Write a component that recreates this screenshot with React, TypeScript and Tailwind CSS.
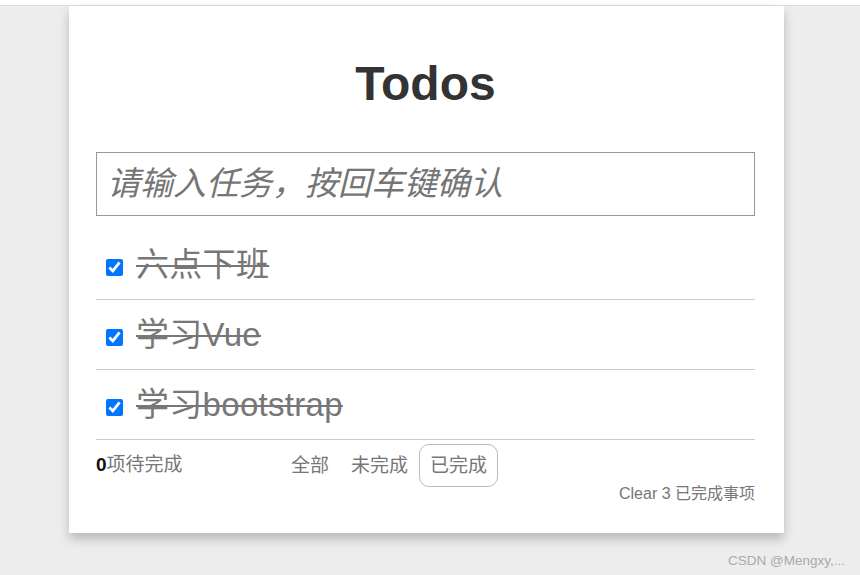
import React from "react";

const todos = ["六点下班", "学习Vue", "学习bootstrap"];

const sans = "font-['Liberation_Sans','Noto_Sans_CJK_SC',sans-serif]";

export default function App() {
  return (
    <div className={`h-[575px] overflow-hidden bg-[#ededed] ${sans}`}>
      <div className="h-[6px] bg-white border-b border-[#dcdcdc]" />

      {/* Card */}
      <div className="ml-[69px] w-[715px] h-[527px] bg-white pl-[27px] pr-[29px] pt-[50px] shadow-[0_6px_10px_rgba(0,0,0,0.22)]">
        <h1 className="text-center text-[48px] leading-[56px] font-bold text-[#333]">Todos</h1>

        <input
          type="text"
          placeholder="请输入任务，按回车键确认"
          className="mt-[40px] block w-full h-[64px] border border-[#999] px-[10px] text-[33px] italic text-[#333] placeholder:text-[#757575] outline-none"
        />

        <ul className="mt-[14px]">
          {todos.map((t) => (
            <li key={t} className="flex items-center h-[70px] border-b border-[#ccc] pl-[10px]">
              <input type="checkbox" defaultChecked className="w-[17px] h-[17px] mt-[6px] accent-[#0075ff]" />
              <span className="ml-[13px] text-[33px] tracking-[0.3px] text-[#777] line-through decoration-[#777] decoration-2">
                {t}
              </span>
            </li>
          ))}
        </ul>

        {/* Footer */}
        <div className="pt-[4px] text-[19px] text-[#777]">
          <div className="flex items-center h-[43px]">
            <span className="w-[184px]">
              <strong className="font-bold text-[#111]">0</strong>项待完成
            </span>
            <ul className="flex items-center">
              <li>
                <a className="block px-[10px] h-[43px] leading-[41px] border border-transparent rounded-lg">全部</a>
              </li>
              <li>
                <a className="block px-[10px] h-[43px] leading-[41px] border border-transparent rounded-lg">未完成</a>
              </li>
              <li>
                <a className="block px-[10px] h-[43px] leading-[41px] border border-[#bbb] rounded-[10px]">已完成</a>
              </li>
            </ul>
          </div>
          <div className="flex justify-end">
            <button className="text-[16px] leading-[14px] text-[#777]">Clear 3 已完成事项</button>
          </div>
        </div>
      </div>

      <div className="mt-[18px] pr-[15px] text-right text-[13.5px] text-[#aaa]">CSDN @Mengxy,...</div>
    </div>
  );
}
